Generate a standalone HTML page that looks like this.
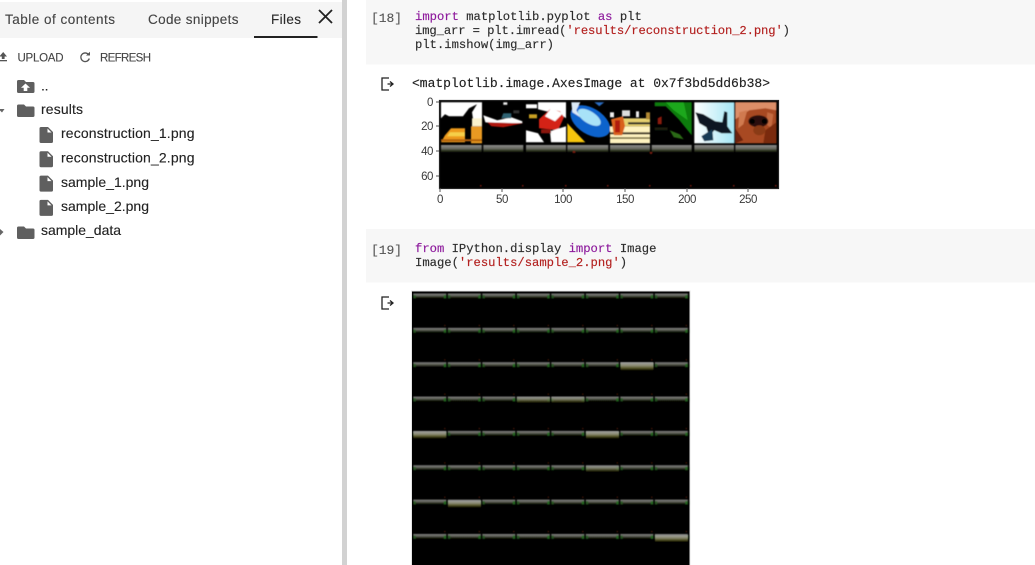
<!DOCTYPE html>
<html lang="en">
<head>
<meta charset="utf-8">
<title>Colab notebook</title>
<style>
html,body{margin:0;padding:0;background:#fff;width:1035px;height:565px;overflow:hidden}
svg{display:block}
.ui{font-family:"Liberation Sans",sans-serif}
.tab{font-size:13.5px;fill:#444;stroke:#444;stroke-width:.12}
.btn{font-size:11.5px;fill:#444;stroke:#444;stroke-width:.1}
.file{font-size:14px;fill:#222;stroke:#222;stroke-width:.12}
.code{font-family:"Liberation Mono",monospace;font-size:12.2px;fill:#2c2c2c;stroke:#2c2c2c;stroke-width:.15}
.kw{fill:#8d1a9c;stroke:#8d1a9c}.str{fill:#b3201f;stroke:#b3201f}
.num{font-family:"Liberation Mono",monospace;font-size:13px;fill:#555;stroke:#555;stroke-width:.12}
.out{font-family:"Liberation Mono",monospace;font-size:13px;fill:#222;stroke:#222;stroke-width:.15}
.tick{font-family:"Liberation Sans",sans-serif;font-size:11.5px;letter-spacing:-.45px;fill:#3a3a3a}
</style>
</head>
<body>
<svg width="1035" height="565" viewBox="0 0 1035 565" xmlns="http://www.w3.org/2000/svg">
<defs>
<filter id="b" x="-2%" y="-2%" width="104%" height="104%"><feGaussianBlur stdDeviation="0.5"/></filter>
<linearGradient id="fade" x1="0" y1="0" x2="0" y2="1">
<stop offset="0" stop-color="#8c8c8c"/><stop offset=".45" stop-color="#6a6b62"/><stop offset=".7" stop-color="#2c3320"/><stop offset="1" stop-color="#000"/>
</linearGradient>
<linearGradient id="fadeB" x1="0" y1="0" x2="0" y2="1">
<stop offset="0" stop-color="#a0a0a0"/><stop offset=".4" stop-color="#8a8a70"/><stop offset=".75" stop-color="#4a4a1c"/><stop offset="1" stop-color="#000"/>
</linearGradient>
<linearGradient id="sky" x1="0" y1="0" x2="1" y2="0">
<stop offset="0" stop-color="#fff"/><stop offset="1" stop-color="#a5e6f4"/>
</linearGradient>
<pattern id="grid" x="413.3" y="293" width="34.5" height="34.35" patternUnits="userSpaceOnUse">
<rect x="0" y="0.500" width="33" height="5" fill="url(#fade)" opacity=".9"/>
<rect x="0" y="2" width="2.500" height="3.500" fill="#22601e" opacity=".7"/>
<rect x="30.500" y="2" width="2.500" height="3.500" fill="#22701e" opacity=".8"/>
<rect x="31" y="32" width="1" height="1" fill="#7a2a10"/>
</pattern>
</defs>

<rect width="1035" height="565" fill="#fff"/>

<!-- Sidebar tabs -->
<rect x="0" y="2" width="342" height="36" fill="#f5f5f5"/>
<rect x="342" y="0" width="5" height="565" fill="#d2d2d2"/>
<text class="ui tab" x="5" y="24" textLength="110" lengthAdjust="spacing">Table of contents</text>
<text class="ui tab" x="148" y="24" textLength="90.500" lengthAdjust="spacing">Code snippets</text>
<text class="ui tab" x="271" y="24" textLength="30" lengthAdjust="spacing" style="fill:#2a2a2a;stroke:#2a2a2a">Files</text>
<rect x="254" y="36" width="63.500" height="2" fill="#222"/>
<path d="M319 10L332 23M332 10L319 23" stroke="#222" stroke-width="1.800" fill="none"/>

<!-- Toolbar -->
<path d="M3.200 52L7 56.500H4.600V59H1.800V56.500H-.6Z" fill="#555"/>
<rect x="-1" y="60" width="8" height="1.300" fill="#555"/>
<text class="ui btn" x="17.500" y="61.500" textLength="46" lengthAdjust="spacing">UPLOAD</text>
<path d="M88.500 54.500A4.300 4.300 0 1 0 89.300 58.500" stroke="#555" stroke-width="1.300" fill="none"/>
<path d="M86 55.500H90V51.700Z" fill="#555"/>
<text class="ui btn" x="100" y="61.500" textLength="51" lengthAdjust="spacing">REFRESH</text>

<!-- Tree -->
<path d="M18.500 80H24L26 82H33Q34.500 82 34.500 83.500V91.500Q34.500 93 33 93H18.500Q17 93 17 91.500V81.500Q17 80 18.500 80Z" fill="#5f5f5f"/>
<path d="M25.500 83.500L30 87.700H27.300V91H23.700V87.700H21Z" fill="#fff"/>
<text class="ui file" x="41" y="90.500" textLength="7.500" lengthAdjust="spacing">..</text>

<path d="M0 109H4.500L2 112.500L0 110.500Z" fill="#666"/>
<path d="M18.500 104.500H24L26 106.500H33Q34.500 106.500 34.500 108V115.500Q34.500 117 33 117H18.500Q17 117 17 115.500V106Q17 104.500 18.500 104.500Z" fill="#5f5f5f"/>
<text class="ui file" x="41" y="114" textLength="42" lengthAdjust="spacing">results</text>

<g fill="#5f5f5f">
<path d="M41 127H48L53 132V141.500Q53 143 51.500 143H41Q39.500 143 39.500 141.500V128.500Q39.500 127 41 127ZM47.500 128.500V132.500H51.500Z" fill-rule="evenodd"/>
<path d="M41 151.300H48L53 156.300V165.800Q53 167.300 51.500 167.300H41Q39.500 167.300 39.500 165.800V152.800Q39.500 151.300 41 151.300ZM47.500 152.800V156.800H51.500Z" fill-rule="evenodd"/>
<path d="M41 175.600H48L53 180.600V190.100Q53 191.600 51.500 191.600H41Q39.500 191.600 39.500 190.100V177.100Q39.500 175.600 41 175.600ZM47.500 177.100V181.100H51.500Z" fill-rule="evenodd"/>
<path d="M41 199.900H48L53 204.900V214.400Q53 215.900 51.500 215.900H41Q39.500 215.900 39.500 214.400V201.400Q39.500 199.900 41 199.900ZM47.500 201.400V205.400H51.500Z" fill-rule="evenodd"/>
</g>
<text class="ui file" x="61" y="138" textLength="133.500" lengthAdjust="spacing">reconstruction_1.png</text>
<text class="ui file" x="61" y="162.500" textLength="133.500" lengthAdjust="spacing">reconstruction_2.png</text>
<text class="ui file" x="61" y="187" textLength="88" lengthAdjust="spacing">sample_1.png</text>
<text class="ui file" x="61" y="211" textLength="88" lengthAdjust="spacing">sample_2.png</text>

<path d="M0 229L3.500 232L0 235.500Z" fill="#666"/>
<path d="M18.500 226.500H24L26 228.500H33Q34.500 228.500 34.500 230V237.500Q34.500 239 33 239H18.500Q17 239 17 237.500V228Q17 226.500 18.500 226.500Z" fill="#5f5f5f"/>
<text class="ui file" x="41" y="235" textLength="80" lengthAdjust="spacing">sample_data</text>

<!-- Cell 18 -->
<rect x="366" y="0" width="669" height="64.500" fill="#f7f7f7"/>
<text class="num" x="371" y="22" textLength="31" lengthAdjust="spacing">[18]</text>
<text class="code" x="415" y="20"><tspan class="kw">import</tspan> matplotlib.pyplot <tspan class="kw">as</tspan> plt</text>
<text class="code" x="415" y="34" textLength="375" lengthAdjust="spacing">img_arr = plt.imread(<tspan class="str">'results/reconstruction_2.png'</tspan>)</text>
<text class="code" x="415" y="48">plt.imshow(img_arr)</text>

<!-- Output 18 -->
<path d="M389 78H382V90H389M390 81.500L393 84L390 86.500M387.500 84H392.500" stroke="#222" stroke-width="1.300" fill="none"/>
<text class="out" x="412" y="87" textLength="358" lengthAdjust="spacing">&lt;matplotlib.image.AxesImage at 0x7f3bd5dd6b38&gt;</text>

<g>
<rect x="439.500" y="100.500" width="339" height="88" fill="#000"/>
<g filter="url(#b)">
<!-- tile 1 -->
<g transform="translate(441 102.300)">
<path d="M0 0H41V23H33L31 10L36 2L28 6L22 14H8L4 12L0 16Z" fill="#fff"/>
<path d="M10 26H24V40H0L4 33Z" fill="#ee9a1c"/>
<path d="M9 30H24V34H6Z" fill="#f6cf4a"/>
<path d="M30 24H41V41H30Z" fill="#e99a20"/>
<path d="M31 16H41V24H31Z" fill="#fbf2cc"/>
<path d="M0 37H41V39H0Z" fill="#b06010"/>
</g>
<!-- tile 2 -->
<g transform="translate(483.300 102.300)">
<path d="M0 13L14 18L28 15L39 19V21L14 22L2 20Z" fill="#fff"/>
<path d="M4 20L40 21L20 25L8 24Z" fill="#b01208"/>
<path d="M20 11H28V16L18 16Z" fill="#2f6272"/>
<rect x="20" y="0" width="4" height="2.500" fill="#eee"/>
<rect x="30" y="8" width="6" height="3" fill="#333"/>
</g>
<!-- tile 3 -->
<g transform="translate(526 102.300)">
<path d="M12 0H40V16L32 10L20 9L12 7Z" fill="#fff"/>
<rect x="0" y="2" width="11" height="4" fill="#fff"/>
<path d="M13 17L24 7L34 9L38 15L32 28L13 26Z" fill="#d42414"/>
<path d="M25 6L37 11L29 19L19 14Z" fill="#fff"/>
<path d="M0 28L12 31L18 40H0Z" fill="#fff"/>
<path d="M24 29L40 24V40H25Z" fill="#fff"/>
<rect x="3" y="12" width="8" height="4" fill="#c9a020"/>
<rect x="15" y="27" width="10" height="4" fill="#8a1810"/>
</g>
<!-- tile 4 -->
<g transform="translate(567.300 102.300)">
<ellipse cx="23" cy="19" rx="22" ry="13" transform="rotate(32 23 19)" fill="#1163cc"/>
<ellipse cx="22" cy="15" rx="13" ry="6" transform="rotate(32 22 15)" fill="#a8e2f8"/>
<path d="M0 21L18 40H0Z" fill="#f7c60f"/>
<path d="M4 0H13L9 8L13 15L5 10Z" fill="#dbe9f6"/>
<path d="M27 0H37L32 4Z" fill="#2c6cc0"/>
</g>
<!-- tile 5 -->
<g transform="translate(610 102.300)">
<rect x="0" y="24" width="40" height="17" fill="#fff3c0"/>
<rect x="13" y="16" width="27" height="8" fill="#e6d070"/>
<rect x="0" y="30" width="40" height="2" fill="#3a3020"/>
<rect x="0" y="35" width="40" height="1.500" fill="#6a6030"/>
<rect x="18" y="20" width="22" height="2" fill="#222"/>
<path d="M1 17L13 14L15 24L12 33L4 33Z" fill="#d9601a"/>
<path d="M5 18H10V30H5Z" fill="#b01a10"/>
<path d="M12 8H20V14H12Z" fill="#ddd"/>
<rect x="36" y="10" width="4" height="7" fill="#b08830"/>
<rect x="0" y="10" width="4" height="5" fill="#eee"/>
<rect x="26" y="9" width="3" height="6" fill="#eee"/>
</g>
<!-- tile 6 -->
<g transform="translate(651.700 102.300)">
<path d="M3 0H40V33L27 17L14 4H3Z" fill="#0e7d10"/>
<path d="M14 0H32L36 18L22 8Z" fill="#1da81a"/>
<path d="M18 28L28 32L32 37L22 35Z" fill="#2c6a12"/>
<path d="M6 16L10 14L10 22L6 22Z" fill="#8a1a0c"/>
<path d="M3 25H16V28H3Z" fill="#1a1f0c"/>
</g>
<!-- tile 7 -->
<g transform="translate(694.300 102.300)">
<rect x="0" y="0" width="40" height="41" fill="url(#sky)"/>
<path d="M1 10L9 12L21 19L28 20L30 9L33 10L33 24L38 31L27 31L20 28L15 34L12 25L5 21L3 15Z" fill="#0d1720"/>
<path d="M7 34L18 27L19 38L10 39Z" fill="#163a54"/>
</g>
<!-- tile 8 -->
<g transform="translate(735.300 102.300)">
<rect x="0" y="0" width="41" height="41" fill="#a84a22"/>
<path d="M0 0H41V8L30 6L14 8L0 17Z" fill="#dc8e68"/>
<path d="M4 10L12 8L8 22L3 26Z" fill="#d07a50"/>
<path d="M32 10L38 12L36 26L31 22Z" fill="#c46a40"/>
<path d="M0 26L8 38L0 41Z" fill="#6c2208"/>
<path d="M30 28L41 20V41H28Z" fill="#7a2c0e"/>
<ellipse cx="23" cy="19" rx="10" ry="6" fill="#2a1008"/>
<ellipse cx="24" cy="28" rx="6" ry="5" fill="#8a3a16"/>
<circle cx="17" cy="19" r="2.500" fill="#000"/><circle cx="29" cy="19" r="2.500" fill="#000"/>
</g>
<!-- second row -->
<g fill="url(#fade)">
<rect x="441" y="145" width="40.700" height="8"/>
<rect x="483.300" y="145" width="40" height="8"/>
<rect x="526" y="145" width="40" height="8"/>
<rect x="567.300" y="145" width="41" height="8"/>
<rect x="610" y="145" width="40" height="8"/>
<rect x="651.700" y="145" width="40" height="8"/>
<rect x="694.300" y="145" width="39.700" height="8"/>
<rect x="735.300" y="145" width="41.400" height="8"/>
</g>
<g fill="#7c1d10">
<rect x="480" y="185" width="1.500" height="1.500"/><rect x="522" y="185" width="1.500" height="1.500"/>
<rect x="565" y="185" width="1.500" height="1.500"/><rect x="607" y="185" width="1.500" height="1.500"/>
<rect x="649" y="185" width="1.500" height="1.500"/><rect x="690" y="185" width="1.500" height="1.500"/>
<rect x="733" y="185" width="1.500" height="1.500"/><rect x="775" y="185" width="1.500" height="1.500"/>
<rect x="573" y="151" width="2" height="2"/><rect x="650" y="152" width="2" height="2"/>
</g>
</g>
<rect x="439.500" y="100.500" width="339" height="88" fill="none" stroke="#222" stroke-width="1.200"/>
<path d="M436 102H439M436 126H439M436 151H439M436 176H439M440 188V192M502 188V192M563 188V192M625 188V192M687 188V192M748 188V192" stroke="#555" stroke-width="1"/>
<text class="tick" x="433" y="106" text-anchor="end">0</text>
<text class="tick" x="433" y="130" text-anchor="end">20</text>
<text class="tick" x="433" y="155" text-anchor="end">40</text>
<text class="tick" x="433" y="180" text-anchor="end">60</text>
<text class="tick" x="440" y="203" text-anchor="middle">0</text>
<text class="tick" x="502" y="203" text-anchor="middle">50</text>
<text class="tick" x="563" y="203" text-anchor="middle">100</text>
<text class="tick" x="625" y="203" text-anchor="middle">150</text>
<text class="tick" x="687" y="203" text-anchor="middle">200</text>
<text class="tick" x="748" y="203" text-anchor="middle">250</text>
</g>

<!-- Cell 19 -->
<rect x="366" y="229" width="669" height="53.500" fill="#f7f7f7"/>
<text class="num" x="371" y="254" textLength="31" lengthAdjust="spacing">[19]</text>
<text class="code" x="415" y="252"><tspan class="kw">from</tspan> IPython.display <tspan class="kw">import</tspan> Image</text>
<text class="code" x="415" y="266">Image(<tspan class="str">'results/sample_2.png'</tspan>)</text>

<!-- Output 19 -->
<path d="M389 297H382V309H389M390 300.500L393 303L390 305.500M387.500 303H392.500" stroke="#222" stroke-width="1.300" fill="none"/>
<rect x="411" y="290.500" width="279.500" height="275" fill="#e4e4e4"/>
<rect x="412" y="291.500" width="277.500" height="274" fill="#000"/>
<rect x="412" y="291.500" width="277.500" height="274" fill="url(#grid)" filter="url(#b)"/>
<g filter="url(#b)">
<rect x="620.500" y="362.500" width="33" height="8" fill="url(#fadeB)"/>
<rect x="413.300" y="431.500" width="33" height="7" fill="url(#fadeB)"/>
<rect x="586" y="431.500" width="33" height="7" fill="url(#fadeB)"/>
<rect x="448" y="500.500" width="33" height="7" fill="url(#fadeB)"/>
<rect x="655" y="535" width="33" height="7" fill="url(#fadeB)"/>
<rect x="517" y="397" width="33" height="6" fill="url(#fadeB)" opacity=".7"/>
<rect x="551.500" y="397" width="33" height="6" fill="url(#fadeB)" opacity=".7"/>
<rect x="586" y="466" width="33" height="6" fill="url(#fadeB)" opacity=".7"/>
</g>
</svg>
</body>
</html>
